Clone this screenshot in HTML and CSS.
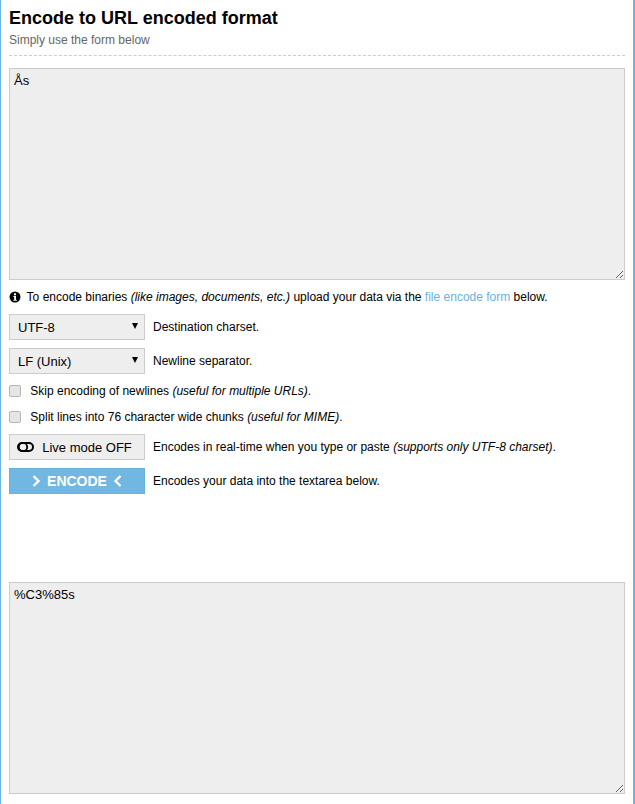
FILE: index.html
```html
<!DOCTYPE html>
<html>
<head>
  <meta charset="UTF-8">
  <title>Encode to URL encoded format</title>
  <link rel="stylesheet" href="styles.css">
</head>
<body>
  <div class="page">
    <h1>Encode to URL encoded format</h1>
    <p class="sub">Simply use the form below</p>
    <div class="rule"></div>

    <textarea class="box">Ås</textarea>

    <p class="info">
      <svg class="info-icon" viewBox="0 0 12 12" width="12" height="12">
        <circle cx="6" cy="6" r="5.5" fill="#000"/>
        <rect x="5" y="2.3" width="2" height="2" fill="#fff"/>
        <path d="M4.4 5.1H7v3.6h.8v1H4.4v-1h.8V6.1h-.8z" fill="#fff"/>
      </svg>
      To encode binaries <i>(like images, documents, etc.)</i> upload your data via the <a href="#">file encode form</a> below.
    </p>

    <div class="row">
      <div class="select-wrap">
        <select><option>UTF-8</option></select>
      </div>
      <span>Destination charset.</span>
    </div>
    <div class="row">
      <div class="select-wrap">
        <select><option>LF (Unix)</option></select>
      </div>
      <span>Newline separator.</span>
    </div>

    <label class="check first"><input type="checkbox"> Skip encoding of newlines <i>(useful for multiple URLs)</i>.</label>
    <label class="check"><input type="checkbox"> Split lines into 76 character wide chunks <i>(useful for MIME)</i>.</label>

    <div class="row live-row">
      <button class="btn live">
        <svg viewBox="0 0 17 10" width="17" height="10">
          <rect x="1" y="1" width="15" height="8" rx="4" fill="none" stroke="#000" stroke-width="2"/>
          <circle cx="6" cy="5" r="4.2" fill="none" stroke="#000" stroke-width="1.8"/>
        </svg>
        Live mode OFF
      </button>
      <span>Encodes in real-time when you type or paste <i>(supports only UTF-8 charset)</i>.</span>
    </div>
    <div class="row">
      <button class="btn encode">
        <svg viewBox="0 0 9 12" width="9" height="12"><path d="M1.5 1l5 5-5 5" fill="none" stroke="#fff" stroke-width="2.4"/></svg>
        ENCODE
        <svg viewBox="0 0 9 12" width="9" height="12"><path d="M7.5 1l-5 5 5 5" fill="none" stroke="#fff" stroke-width="2.4"/></svg>
      </button>
      <span>Encodes your data into the textarea below.</span>
    </div>

    <textarea class="box output">%C3%85s</textarea>
  </div>
</body>
</html>
```

FILE: styles.css
```css
* { box-sizing: border-box; }
html, body { margin: 0; padding: 0; }
body { font-family: "Liberation Sans", Arial, sans-serif; font-size: 12px; color: #000; background: #fff; }
.page { width: 635px; height: 804px; overflow: hidden; padding: 9px 8px 0; border-left: 1px solid #6cb4e2; border-right: 2px solid #6cb4e2; }
h1 { margin: 0; font-size: 18px; line-height: 18px; font-weight: bold; }
.sub { margin: 6px 0 0; line-height: 14px; color: #666; }
.rule { margin-top: 8px; border-top: 1px dashed #ccc; }
.box { display: block; width: 616px; height: 212px; margin-top: 12px; padding: 4px; background: #eee; border: 1px solid #ccc; border-radius: 0; outline: none; font-family: "Liberation Sans", Arial, sans-serif; font-size: 13px; line-height: 15px; color: #000; }
.output { margin-top: 88px; }
.info { margin: 10px 0 0; height: 14px; line-height: 14px; white-space: nowrap; }
.info-icon { vertical-align: -2px; margin-right: 2.5px; }
a { color: #6cb0e0; text-decoration: none; }
.row { display: flex; align-items: center; gap: 8px; margin-top: 8px; height: 26px; }
.info + .row { margin-top: 10px; }
.select-wrap { position: relative; width: 136px; height: 26px; }
.select-wrap::after { content: ""; position: absolute; right: 7px; top: 9px; border-left: 3px solid transparent; border-right: 3px solid transparent; border-top: 6px solid #000; }
select { appearance: none; width: 100%; height: 100%; padding: 0 8px; background: #eee; border: 1px solid #ccc; border-radius: 0; font-family: inherit; font-size: 13px; color: #000; }
.check { display: flex; align-items: center; height: 14px; margin-top: 12px; white-space: pre; }
.check.first { margin-top: 10px; }
.check input { appearance: none; width: 12px; height: 12px; margin: 0 6px 0 0; background: #e6e6e6; border: 1px solid #b4b4b4; border-radius: 2px; }
.live-row { margin-top: 10px; }
.btn { display: flex; align-items: center; justify-content: center; gap: 6px; width: 136px; height: 26px; padding: 0; background: #eee; border: 1px solid #ccc; font-family: inherit; font-size: 14px; color: #000; }
.live { gap: 8px; padding-right: 5px; font-size: 13px; }
.encode { background: #72b6e2; border-color: #6cb0e0; color: #fff; font-weight: bold; gap: 6px; }
```
